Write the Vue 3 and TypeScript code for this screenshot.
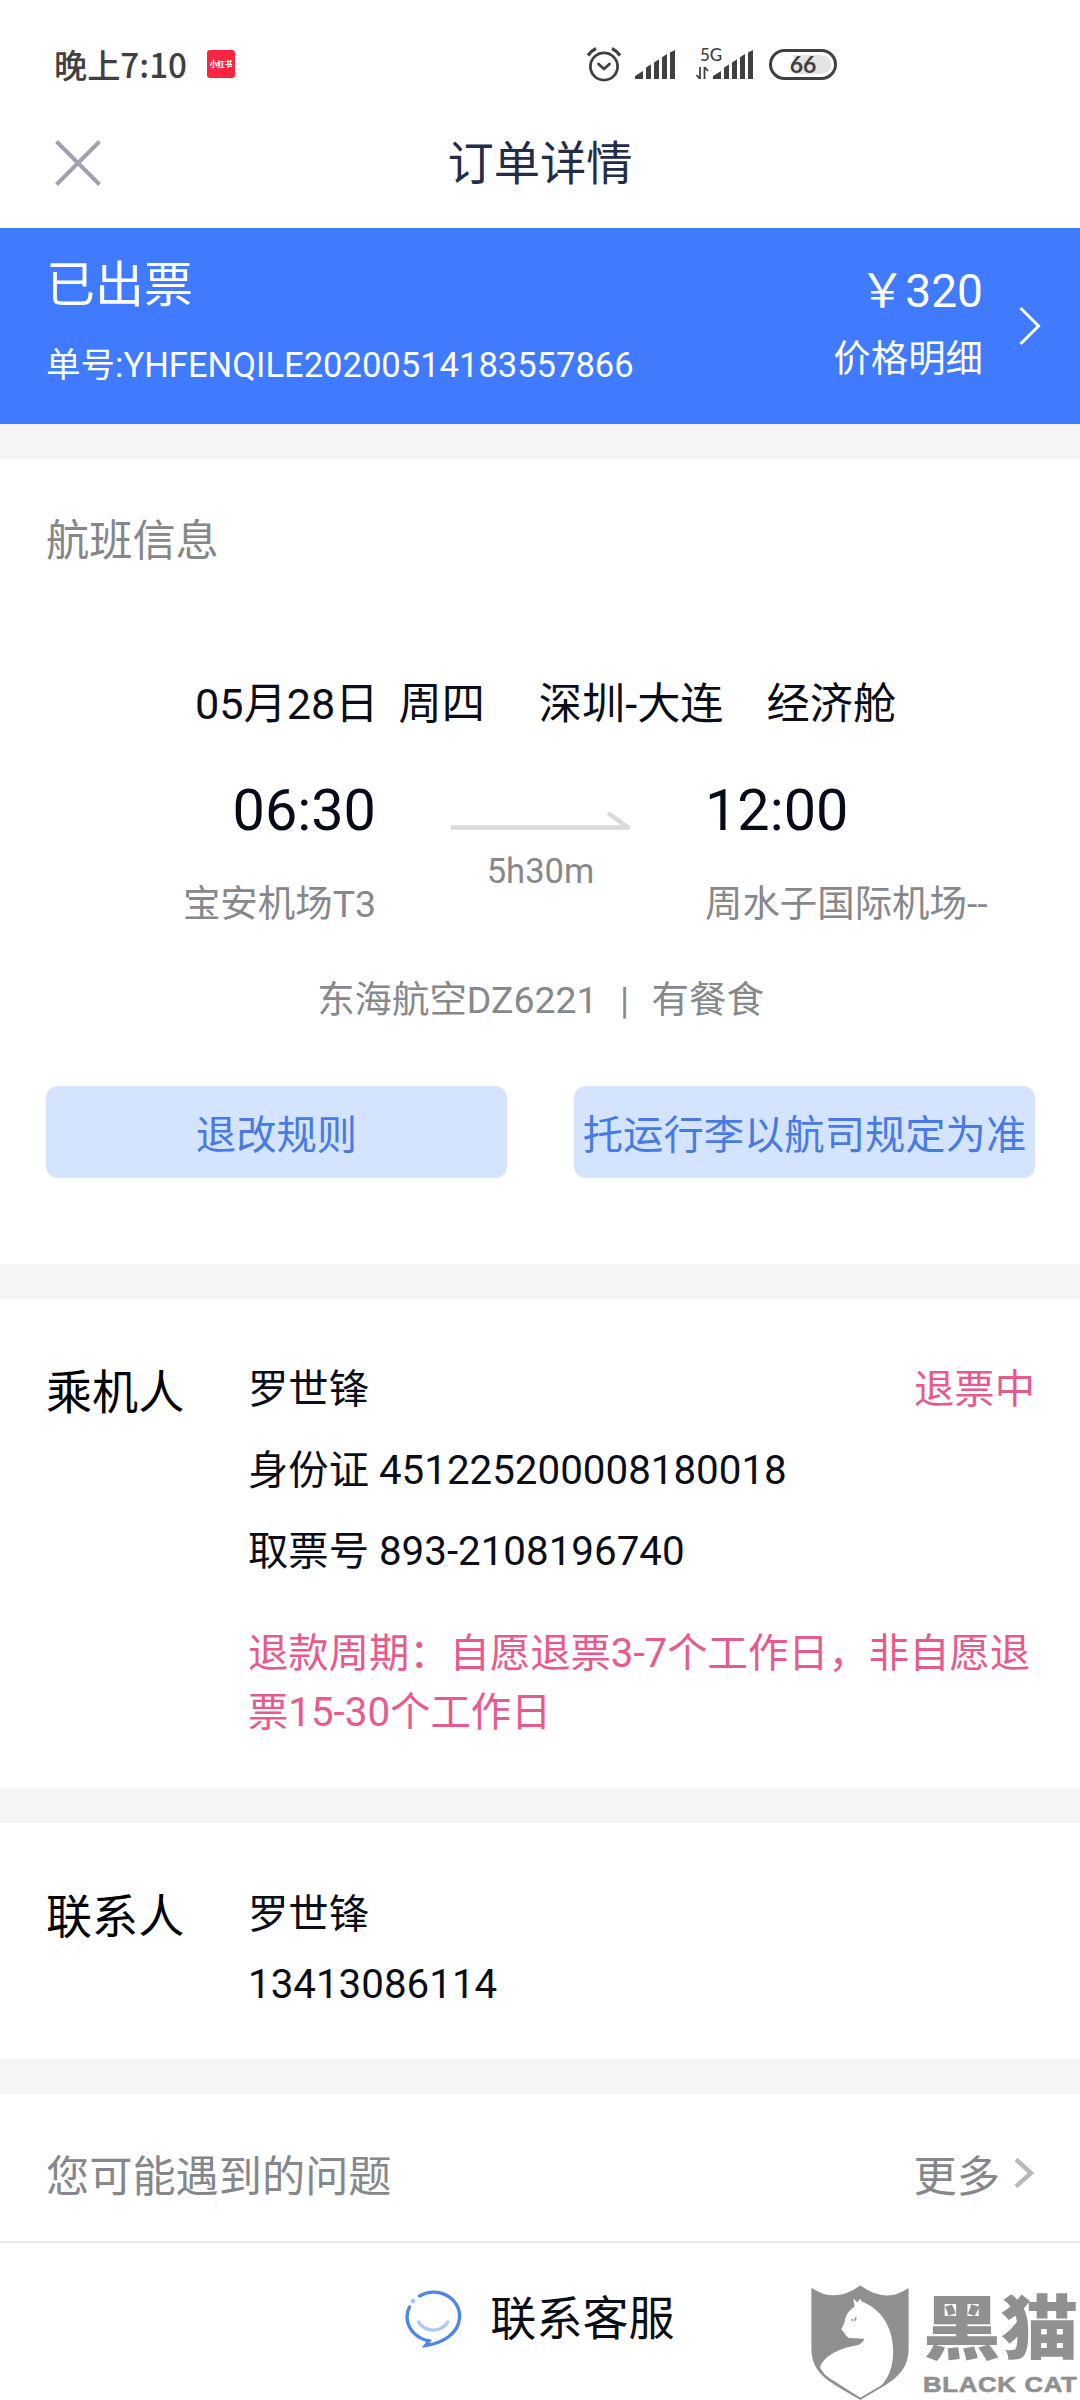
<script setup lang="ts">
interface Segment {
  text: string
  gap: number
}

const bars = [
  'M0 29v-3l8-5v8z',
  'M11 29V17.600l5-3.200V29z',
  'M19 29V12.400l5-3.200V29z',
  'M27 29V7.200l5-3.200V29z',
  'M35 29V2.400L40 0v29z',
]

const summary: Segment[] = [
  { text: '05月28日', gap: 0 },
  { text: '周四', gap: 20 },
  { text: '深圳-大连', gap: 54 },
  { text: '经济舱', gap: 43 },
]

const passengerLines = ['罗世锋', '身份证 451225200008180018', '取票号 893-2108196740']
const contactLines = ['罗世锋', '13413086114']
</script>

<template>
  <div class="page">
    <header class="status">
      <span class="clock">晚上7:10</span>
      <span class="app-badge">小红书</span>
      <svg class="alarm" width="36" height="36" viewBox="0 0 36 36" fill="none" stroke="#404040">
        <circle cx="18" cy="20.500" r="13.600" stroke-width="2.800" />
        <path d="M12.500 18l5.500 5 5.500-5" stroke-width="2.800" stroke-linecap="round" stroke-linejoin="round" />
        <path d="M2 9.500Q5 5 10 2.500M34 9.500Q31 5 26 2.500" stroke-width="3.200" />
      </svg>
      <svg class="signal" width="40" height="29" viewBox="0 0 40 29" fill="#404040">
        <path v-for="d in bars" :key="d" :d="d" />
      </svg>
      <div class="network">
        <span class="gen">5G</span>
        <svg width="13" height="12" viewBox="0 0 13 12" fill="none" stroke="#404040" stroke-width="1.800">
          <path d="M4 0v12L.5 8M8.500 12V0L12 4" />
        </svg>
      </div>
      <svg class="signal second" width="40" height="29" viewBox="0 0 40 29" fill="#404040">
        <path v-for="d in bars" :key="d" :d="d" />
      </svg>
      <span class="battery"><span class="charge">66</span></span>
    </header>

    <nav class="nav">
      <svg class="close" width="46" height="46" viewBox="0 0 46 46" fill="none" stroke="#9fa2ae" stroke-width="4">
        <path d="M1.500 1.500l43 43M44.500 1.500l-43 43" />
      </svg>
      <h1>订单详情</h1>
    </nav>

    <section class="ticket">
      <div class="ticket-left">
        <div class="state">已出票</div>
        <div class="order">单号:YHFENQILE20200514183557866</div>
      </div>
      <div class="ticket-right">
        <div class="price">￥320</div>
        <div class="detail">价格明细</div>
      </div>
      <svg class="ticket-arrow" width="24" height="40" viewBox="0 0 24 40" fill="none" stroke="#fff" stroke-width="3">
        <path d="M1.500 2l18 18-18 18" />
      </svg>
    </section>

    <section class="card flight">
      <h2>航班信息</h2>
      <div class="summary">
        <span v-for="s in summary" :key="s.text" :style="{ marginLeft: s.gap + 'px' }">{{ s.text }}</span>
      </div>
      <div class="route">
        <div class="from">
          <div class="time">06:30</div>
          <div class="airport">宝安机场T3</div>
        </div>
        <div class="leg">
          <svg width="180" height="20" viewBox="0 0 180 20" fill="none" stroke="#dadada" stroke-width="4.500">
            <path d="M0 16.500H177L157 2" stroke-linejoin="round" />
          </svg>
          <div class="duration">5h30m</div>
        </div>
        <div class="to">
          <div class="time">12:00</div>
          <div class="airport">周水子国际机场--</div>
        </div>
      </div>
      <div class="airline"><span>东海航空DZ6221</span><span class="bar">|</span><span>有餐食</span></div>
      <div class="actions">
        <button>退改规则</button>
        <button>托运行李以航司规定为准</button>
      </div>
    </section>

    <section class="card passenger">
      <div class="label">乘机人</div>
      <div class="info">
        <div v-for="line in passengerLines" :key="line">{{ line }}</div>
        <p class="note">退款周期：自愿退票3-7个工作日，非自愿退票15-30个工作日</p>
      </div>
      <div class="refund">退票中</div>
    </section>

    <section class="card contact">
      <div class="label">联系人</div>
      <div class="info">
        <div v-for="line in contactLines" :key="line">{{ line }}</div>
      </div>
    </section>

    <section class="card faq">
      <span>您可能遇到的问题</span>
      <span class="more">更多</span>
      <svg width="22" height="30" viewBox="0 0 22 30" fill="none" stroke="#b9b9bc" stroke-width="4.500">
        <path d="M2 1.500L17 15 2 28.500" />
      </svg>
    </section>

    <footer class="service">
      <svg width="58" height="60" viewBox="0 0 58 60" fill="none" stroke-linecap="round">
        <path
          d="M14.500 7C22 2.500 33 1.500 41 6c9.500 5 14.500 14 13.500 23.500C53 44 39 54 20.500 56.500l3.500-4.500C11.500 49.500 2.500 40 2 28.500 2 24.500 2.800 21 4.500 18"
          stroke="#4f86ee" stroke-width="3.400"
        />
        <circle cx="8" cy="12" r="2.200" fill="#a9c1f6" />
        <path d="M13.500 33c7 10.500 22 11 29.500 0" stroke="#b4c6f4" stroke-width="3.200" />
      </svg>
      <span>联系客服</span>
    </footer>

    <div class="watermark">
      <svg width="98" height="115" viewBox="93 75 292 343">
        <path fill="#919091" d="M94 83Q166 132 240 76Q314 132 384 84V262C384 344 330 364 240 418C150 364 94 344 94 262Z" />
        <path
          fill="#fff"
          d="M219 116L232 127 239 117 246 125C300 146 338 200 338 272C338 312 328 348 304 373L240 411 152 355Q128 340 120 320C132 286 176 264 234 254Q248 247 252 235L206 233Q197 228 193 218L183 207C190 196 193 188 195 175Q200 155 223 139Z"
        />
        <path fill="#919091" d="M212 179l8-4-3 9zM224 172l5-2-1 9-7 6z" />
      </svg>
      <div class="brand">
        <div class="brand-cn">黑猫</div>
        <div class="brand-en">BLACK CAT</div>
      </div>
    </div>
  </div>
</template>

<style>
body {
  margin: 0;
  background: #fff;
}
</style>

<style scoped>
.page {
  position: relative;
  width: 1080px;
  height: 2400px;
  overflow: hidden;
  background: #fff;
  color: #0b0d18;
  font-family: Roboto, "Noto Sans CJK SC", sans-serif;
  font-size: 40.320px;
}
h1, h2, p {
  margin: 0;
  font-weight: 400;
}
.status {
  display: flex;
  align-items: center;
  height: 128px;
  padding-left: 54px;
  box-sizing: border-box;
  color: #404040;
}
.clock {
  width: 153px;
  padding-bottom: 1px;
  font: 500 33.200px/46px "Noto Sans CJK SC", sans-serif;
  white-space: nowrap;
}
.app-badge {
  width: 28px;
  height: 28px;
  border-radius: 3px;
  background: #fd2442;
  color: #fff;
  font: 900 7.500px/28px "Noto Sans CJK SC", sans-serif;
  text-align: center;
}
.alarm {
  margin-left: 351px;
}
.signal {
  margin-left: 13px;
}
.network {
  width: 27px;
  height: 32px;
  margin-left: 21px;
  display: flex;
  flex-direction: column;
}
.gen {
  height: 19px;
  padding-left: 4px;
  font: 500 17px/14px Lato, sans-serif;
}
.second {
  margin-left: -10px;
}
.battery {
  width: 68px;
  height: 31px;
  margin-left: 16px;
  padding: 3px;
  box-sizing: border-box;
  border: 3px solid #404040;
  border-radius: 16px;
  display: flex;
}
.charge {
  flex: 1;
  border-radius: 9px;
  background: linear-gradient(90deg, transparent 34%, #e4e4e4 34%);
  font: 700 23px/18px Lato, sans-serif;
  text-align: center;
}
.nav {
  display: flex;
  align-items: center;
  height: 100px;
  padding: 0 55px 30px;
  box-sizing: border-box;
}
.nav h1 {
  flex: 1;
  padding: 2px 46px 0 0;
  color: #232d49;
  font-size: 46.300px;
  line-height: 60px;
  text-align: center;
}
.ticket {
  display: flex;
  height: 196px;
  background: #407aff;
  color: #fff;
}
.ticket-left {
  flex: 1;
  padding: 28px 0 0 46px;
}
.state {
  font-size: 48.960px;
  line-height: 60px;
}
.order {
  margin-top: 24px;
  font-size: 34.560px;
  line-height: 50px;
}
.ticket-right {
  padding-top: 33px;
  text-align: right;
}
.price {
  font-size: 46.080px;
  line-height: 60px;
}
.detail {
  margin-top: 13px;
  font-size: 37.440px;
  line-height: 50px;
}
.ticket-arrow {
  margin: 78px 37px 0 36px;
}
.card {
  box-sizing: border-box;
  border-top: 35px solid #f4f6f6;
}
.flight {
  height: 840px;
  padding-top: 53px;
}
.flight h2 {
  padding-left: 46px;
  color: #85878b;
  font-size: 43.200px;
  line-height: 60px;
}
.summary {
  display: flex;
  margin-top: 103px;
  padding-left: 195px;
  font-size: 43.200px;
  line-height: 60px;
}
.route {
  display: grid;
  grid-template-columns: 376px 329px 1fr;
  margin-top: 36px;
}
.from {
  text-align: right;
}
.time {
  color: #050b18;
  font-size: 57.600px;
  line-height: 80px;
}
.airport {
  margin-top: 23px;
  color: #87888b;
  font-size: 37.440px;
  line-height: 60px;
}
.leg {
  display: flex;
  flex-direction: column;
  align-items: center;
  padding-top: 40px;
}
.duration {
  margin-top: 20px;
  color: #87888b;
  font-size: 34.560px;
  line-height: 40px;
}
.airline {
  display: flex;
  justify-content: center;
  margin-top: 36px;
  padding-left: 1px;
  color: #87888b;
  font-size: 37.440px;
  line-height: 60px;
}
.bar {
  width: 54px;
  text-align: center;
}
.actions {
  display: flex;
  justify-content: space-between;
  margin-top: 56px;
  padding: 0 45px 0 46px;
}
button {
  width: 461px;
  height: 92px;
  padding: 7px 0 0;
  border: 0;
  border-radius: 12px;
  background: #d5e4fe;
  color: #477be3;
  font: 40.320px/60px Roboto, "Noto Sans CJK SC", sans-serif;
  white-space: nowrap;
}
.passenger {
  display: flex;
  height: 524px;
  padding: 50px 45px 0 46px;
  line-height: 81px;
}
.label {
  width: 202px;
  padding-top: 4px;
  color: #000;
  font-size: 46.080px;
}
.info {
  width: 785px;
}
.note {
  margin-top: 32px;
  line-height: 59px;
  color: #e75a8e;
}
.refund {
  width: 121px;
  margin-left: -119px;
  height: 81px;
  color: #e75a8e;
  white-space: nowrap;
}
.contact {
  display: flex;
  height: 271px;
  padding: 57px 45px 0 46px;
  line-height: 70px;
}
.contact .label {
  padding-top: 2px;
}
.faq {
  display: flex;
  align-items: center;
  height: 182px;
  padding: 11px 44px 0 46px;
  color: #85878b;
  font-size: 43.200px;
}
.more {
  margin-left: auto;
  margin-right: 14px;
}
.service {
  display: flex;
  align-items: center;
  justify-content: center;
  height: 159px;
  padding: 0 0 6px;
  box-sizing: border-box;
  border-top: 2px solid #e9ebec;
  font-size: 46.080px;
  line-height: 60px;
  gap: 27px;
}
.watermark {
  position: absolute;
  left: 811px;
  top: 2285px;
  display: flex;
  color: #919091;
}
.brand {
  width: 155px;
  margin-left: 14px;
}
.brand-cn {
  height: 90px;
  font: 900 70px/78px "Noto Sans CJK SC", sans-serif;
  transform: scaleX(1.11);
  transform-origin: 0 50%;
}
.brand-en {
  font: 900 22px/20px "Liberation Sans", sans-serif;
  letter-spacing: 0.600px;
  white-space: nowrap;
  transform: scaleX(1.17);
  transform-origin: 0 50%;
  -webkit-text-stroke: 0.600px #919091;
}
</style>
